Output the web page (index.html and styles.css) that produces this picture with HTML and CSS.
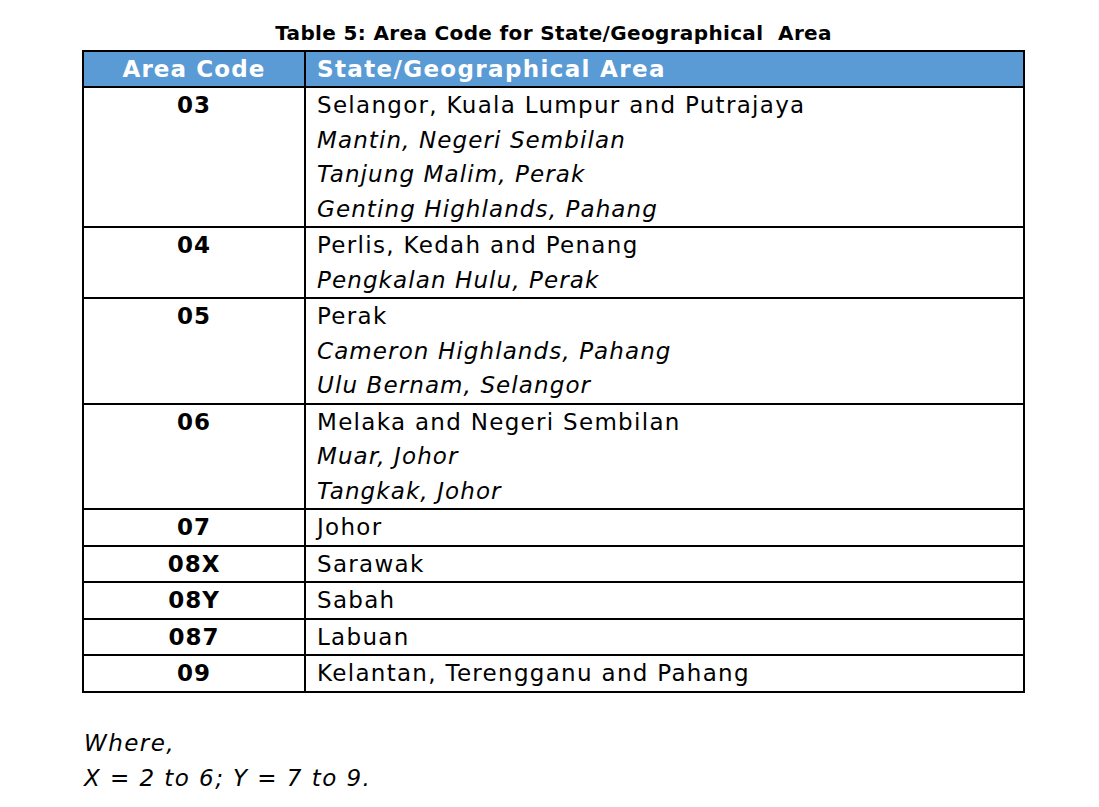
FILE: index.html
```html
<!DOCTYPE html>
<html lang="en">
<head>
<meta charset="utf-8">
<title>Table 5: Area Code for State/Geographical Area</title>
<link rel="stylesheet" href="styles.css">
</head>
<body>
<main class="page">
  <h1 class="caption">Table 5: Area Code for State/Geographical&nbsp; Area</h1>
  <table class="codes">
    <thead>
      <tr><th class="col-code">Area Code</th><th class="col-area">State/Geographical Area</th></tr>
    </thead>
    <tbody>
      <tr><td class="code">03</td><td class="area"><div>Selangor, Kuala Lumpur and Putrajaya</div><div class="it">Mantin, Negeri Sembilan</div><div class="it">Tanjung Malim, Perak</div><div class="it">Genting Highlands, Pahang</div></td></tr>
      <tr><td class="code">04</td><td class="area"><div>Perlis, Kedah and Penang</div><div class="it">Pengkalan Hulu, Perak</div></td></tr>
      <tr><td class="code">05</td><td class="area"><div>Perak</div><div class="it">Cameron Highlands, Pahang</div><div class="it">Ulu Bernam, Selangor</div></td></tr>
      <tr><td class="code">06</td><td class="area"><div>Melaka and Negeri Sembilan</div><div class="it">Muar, Johor</div><div class="it">Tangkak, Johor</div></td></tr>
      <tr><td class="code">07</td><td class="area"><div>Johor</div></td></tr>
      <tr><td class="code">08X</td><td class="area"><div>Sarawak</div></td></tr>
      <tr><td class="code">08Y</td><td class="area"><div>Sabah</div></td></tr>
      <tr><td class="code">087</td><td class="area"><div>Labuan</div></td></tr>
      <tr><td class="code">09</td><td class="area"><div>Kelantan, Terengganu and Pahang</div></td></tr>
    </tbody>
  </table>
  <div class="note">
    <p>Where,</p>
    <p>X = 2 to 6; Y = 7 to 9.</p>
  </div>
</main>
</body>
</html>
```
FILE: styles.css
```css
html, body {
  margin: 0;
  padding: 0;
  background: #ffffff;
}
body {
  font-family: "DejaVu Sans", Verdana, sans-serif;
  color: #000000;
}
.page {
  width: 943px;
  padding: 17px 0 0 82px;
}
.caption {
  margin: 0;
  font-size: 20px;
  font-weight: bold;
  text-align: center;
  line-height: 33px;
  letter-spacing: 0.35px;
  white-space: pre;
}
.codes {
  width: 943px;
  border-collapse: collapse;
  border: 2px solid #000;
  font-size: 23px;
  line-height: 34.5px;
}
.codes th {
  background: #5b9bd5;
  color: #ffffff;
  font-weight: bold;
  height: 34px;
  padding: 0;
  line-height: 34px;
  letter-spacing: 1.1px;
  border: 2px solid #000;
}
.col-code {
  width: 220px;
  text-align: center;
}
.codes th.col-area {
  text-align: left;
  padding-left: 11px;
  letter-spacing: 1.35px;
}
.codes td {
  border: 2px solid #000;
  padding: 0;
  vertical-align: top;
}
.codes td.code {
  text-align: center;
  font-weight: bold;
  letter-spacing: 1px;
}
.codes td.area {
  padding-left: 11px;
  letter-spacing: 1.3px;
}
.codes td.area .it {
  font-style: italic;
  letter-spacing: 1.1px;
}
.note {
  margin-top: 33px;
  padding-left: 2px;
  font-size: 23px;
  font-style: italic;
  line-height: 35px;
  letter-spacing: 1.45px;
}
.note p {
  margin: 0;
}
```
